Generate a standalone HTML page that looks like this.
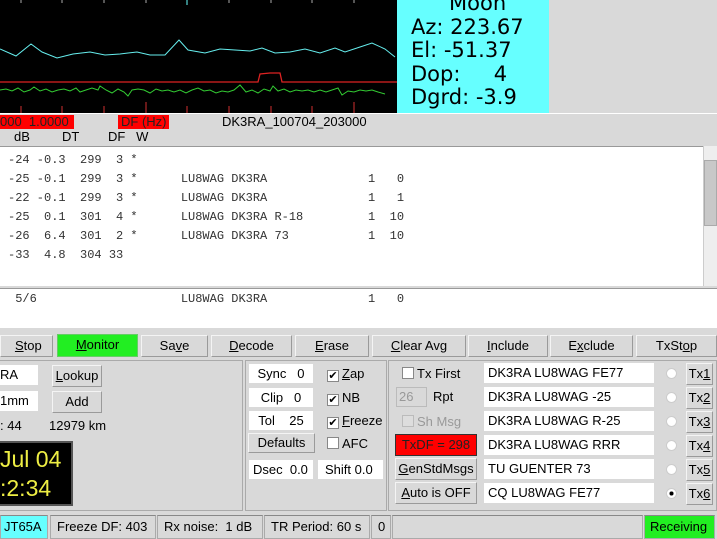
<!DOCTYPE html>
<html><head><meta charset="utf-8"><style>
*{box-sizing:border-box;margin:0;padding:0}
body{width:717px;height:539px;overflow:hidden;background:#d9d9d9;font-family:"Liberation Sans",sans-serif;font-size:13px;color:#000;position:relative}
.a{position:absolute}
.btn{position:absolute;background:#d9d9d9;border:1px solid #f4f4f4;border-right-color:#9a9a9a;border-bottom-color:#9a9a9a;text-align:center;font-size:13px;line-height:20px}
.in{position:absolute;background:#fff;font-size:13px;line-height:19px;padding-left:4px}
.cb{display:inline-block;width:12px;height:12px;background:#fff;border:1px solid #888;vertical-align:-1px;margin-right:3px;font-size:11px;line-height:10px;text-align:center}
.rad{position:absolute;width:11px;height:11px;border-radius:50%;background:#fff;border:1px solid #ccc}
pre{font-family:"Liberation Mono",monospace;font-size:12px;line-height:19px;color:#333}
.sb{position:absolute;top:515px;height:24px;border:1px solid #aaa;border-top-color:#888;line-height:22px;font-size:13px;padding-left:6px}
u{text-decoration:underline}
</style></head><body>
<div class="a" style="left:0;top:0;width:397px;height:113px;background:#000">
<svg width="397" height="113">
<g stroke="#d03030" stroke-width="1">
<line x1="21" y1="106" x2="21" y2="113"/><line x1="62" y1="106" x2="62" y2="113"/><line x1="104" y1="106" x2="104" y2="113"/><line x1="146" y1="102" x2="146" y2="113"/><line x1="187" y1="106" x2="187" y2="113"/><line x1="229" y1="106" x2="229" y2="113"/><line x1="271" y1="106" x2="271" y2="113"/><line x1="312" y1="106" x2="312" y2="113"/><line x1="354" y1="102" x2="354" y2="113"/></g>
<g stroke="#aaa"><line x1="21" y1="0" x2="21" y2="3"/><line x1="62" y1="0" x2="62" y2="3"/><line x1="104" y1="0" x2="104" y2="3"/><line x1="146" y1="0" x2="146" y2="3"/><line x1="229" y1="0" x2="229" y2="3"/><line x1="271" y1="0" x2="271" y2="3"/><line x1="312" y1="0" x2="312" y2="3"/><line x1="354" y1="0" x2="354" y2="3"/></g>
<line x1="187" y1="0" x2="187" y2="5" stroke="#6ff"/>
<polyline fill="none" stroke="#6ee" stroke-width="1" points="0,49 16,56 31,44 42,52 57,58 73,54 90,52 105,55 120,54 137,52 150,55 165,55 179,40 188,50 205,53 220,49 235,50 250,51 262,48 275,53 290,52 305,49 320,53 335,48 345,52 360,47 372,43 385,49 395,57"/>
<polyline fill="none" stroke="#d22" stroke-width="1.3" points="0,82 258,82 260,74 270,73 280,73 282,82 397,82"/>
<polyline fill="none" stroke="#3c3" stroke-width="1" points="0,90 6,89 12,91 18,88 24,92 30,90 34,87 40,91 46,89 52,92 58,90 64,89 70,91 76,88 80,92 86,90 92,88 98,90 100,86 106,90 112,93 118,89 124,92 128,96 132,90 138,89 144,90 150,93 156,89 162,91 168,90 174,92 180,90 186,93 192,90 198,88 204,91 210,90 216,93 222,91 228,92 234,90 240,85 246,92 252,90 258,93 264,89 270,91 273,86 278,91 284,89 290,92 296,90 302,91 308,90 314,92 320,90 326,92 332,90 338,88 342,95 348,91 354,92 360,90 366,91 372,90 378,92 385,94"/>
</svg></div>
<div class="a" style="left:397px;top:0;width:152px;height:113px;background:#6ff;font-family:'DejaVu Sans',sans-serif;font-size:21px;line-height:23.5px;padding-left:14px">
<div style="margin-top:-8px;padding-left:38px">Moon</div><div>Az: 223.67</div><div>El: -51.37</div><div>Dop:&nbsp;&nbsp;&nbsp;&nbsp;&nbsp;4</div><div>Dgrd: -3.9</div></div>
<div class="a" style="left:0;top:113px;width:717px;height:1px;background:#fff"></div>
<div class="a" style="left:0;top:115px;width:74px;height:14px;background:#f00;font-size:13px;line-height:14px;color:#222">000&nbsp;&nbsp;1.0000</div>
<div class="a" style="left:118px;top:115px;width:51px;height:14px;background:#f00;font-size:13px;line-height:14px;color:#222;padding-left:3px">DF (Hz)</div>
<div class="a" style="left:222px;top:115px;font-size:13px;line-height:14px">DK3RA_100704_203000</div>
<div class="a" style="left:14px;top:130px;font-size:13px;line-height:14px;word-spacing:0">dB</div>
<div class="a" style="left:62px;top:130px;font-size:13px;line-height:14px">DT</div>
<div class="a" style="left:108px;top:130px;font-size:13px;line-height:14px">DF&nbsp;&nbsp;&nbsp;W</div>
<div class="a" style="left:0;top:146px;width:703px;height:140px;background:#fff;border-top:1px solid #999;padding:4px 0 0 8px"><pre>-24 -0.3  299  3 *
-25 -0.1  299  3 *      LU8WAG DK3RA              1   0
-22 -0.1  299  3 *      LU8WAG DK3RA              1   1
-25  0.1  301  4 *      LU8WAG DK3RA R-18         1  10
-26  6.4  301  2 *      LU8WAG DK3RA 73           1  10
-33  4.8  304 33</pre></div>
<div class="a" style="left:703px;top:146px;width:14px;height:140px;background:#eee;border-left:1px solid #ccc"><div style="margin-top:14px;height:66px;background:#c8c8c8;border:1px solid #aaa"></div></div>
<div class="a" style="left:0;top:288px;width:717px;height:40px;background:#fff;border-top:1px solid #999;padding:1px 0 0 8px"><pre> 5/6                    LU8WAG DK3RA              1   0</pre></div>
<div class="btn" style="left:0;top:335px;width:53px;height:22px">&nbsp;<u>S</u>top</div>
<div class="btn" style="left:57px;top:334px;width:81px;height:23px;background:#2e2;border:1px solid #6c6"><u>M</u>onitor</div>
<div class="btn" style="left:141px;top:335px;width:67px;height:22px">Sa<u>v</u>e</div>
<div class="btn" style="left:211px;top:335px;width:81px;height:22px"><u>D</u>ecode</div>
<div class="btn" style="left:295px;top:335px;width:74px;height:22px"><u>E</u>rase</div>
<div class="btn" style="left:372px;top:335px;width:94px;height:22px"><u>C</u>lear Avg</div>
<div class="btn" style="left:468px;top:335px;width:80px;height:22px"><u>I</u>nclude</div>
<div class="btn" style="left:550px;top:335px;width:83px;height:22px">E<u>x</u>clude</div>
<div class="btn" style="left:636px;top:335px;width:81px;height:22px">TxSt<u>o</u>p</div>
<div class="a" style="left:0;top:360px;width:243px;height:151px;border:1px solid #aaa;border-left:none"></div>
<div class="a" style="left:245px;top:360px;width:142px;height:151px;border:1px solid #aaa"></div>
<div class="a" style="left:388px;top:360px;width:329px;height:151px;border:1px solid #aaa"></div>
<div class="in" style="left:0;top:365px;width:38px;height:20px;padding-left:0">RA</div>
<div class="btn" style="left:52px;top:365px;width:50px;height:22px"><u>L</u>ookup</div>
<div class="in" style="left:0;top:391px;width:38px;height:20px;padding-left:0">1mm</div>
<div class="btn" style="left:52px;top:391px;width:50px;height:22px">Add</div>
<div class="a" style="left:0;top:418px;line-height:16px">: 44</div>
<div class="a" style="left:49px;top:418px;line-height:16px">12979 km</div>
<div class="a" style="left:-2px;top:441px;width:75px;height:65px;background:#000;border:2px solid #555;color:#ee4;font-size:23px;line-height:29px;padding-top:2px">Jul 04<br>:2:34</div>
<div class="in" style="left:249px;top:364px;width:64px;height:19px;text-align:center;padding:0">Sync&nbsp;&nbsp; 0</div>
<div class="in" style="left:249px;top:388px;width:64px;height:19px;text-align:center;padding:0">Clip&nbsp;&nbsp; 0</div>
<div class="in" style="left:249px;top:411px;width:64px;height:19px;text-align:center;padding:0">Tol&nbsp;&nbsp;&nbsp; 25</div>
<div class="btn" style="left:248px;top:433px;width:67px;height:20px;line-height:18px">Defaults</div>
<div class="in" style="left:249px;top:460px;width:64px;height:19px;padding:0 0 0 4px">Dsec&nbsp; 0.0</div>
<div class="in" style="left:318px;top:460px;width:65px;height:19px;padding:0 0 0 7px">Shift 0.0</div>
<div class="a" style="left:327px;top:366px;line-height:16px"><span class="cb">✔</span><u>Z</u>ap</div>
<div class="a" style="left:327px;top:390px;line-height:16px"><span class="cb">✔</span>NB</div>
<div class="a" style="left:327px;top:413px;line-height:16px"><span class="cb">✔</span><u>F</u>reeze</div>
<div class="a" style="left:327px;top:436px;line-height:16px"><span class="cb"></span>AFC</div>
<div class="a" style="left:402px;top:366px;line-height:16px"><span class="cb"></span>Tx First</div>
<div class="a" style="left:396px;top:387px;width:31px;height:20px;background:#d9d9d9;border:1px solid #bbb;color:#999;line-height:18px;padding-left:2px">26</div>
<div class="a" style="left:433px;top:389px;line-height:16px">Rpt</div>
<div class="a" style="left:402px;top:414px;line-height:16px;color:#999"><span class="cb" style="background:#ddd;border-color:#bbb"></span>Sh Msg</div>
<div class="btn" style="left:395px;top:434px;width:82px;height:22px;background:#f00;border:1px solid #333;color:#222">TxDF = 298</div>
<div class="btn" style="left:395px;top:458px;width:82px;height:22px"><u>G</u>enStdMsgs</div>
<div class="btn" style="left:395px;top:482px;width:82px;height:22px"><u>A</u>uto is OFF</div>
<div class="in" style="left:484px;top:363px;width:170px;height:20px">DK3RA LU8WAG FE77</div>
<div class="in" style="left:484px;top:387px;width:170px;height:20px">DK3RA LU8WAG -25</div>
<div class="in" style="left:484px;top:411px;width:170px;height:20px">DK3RA LU8WAG R-25</div>
<div class="in" style="left:484px;top:435px;width:170px;height:20px">DK3RA LU8WAG RRR</div>
<div class="in" style="left:484px;top:459px;width:170px;height:20px">TU GUENTER 73</div>
<div class="in" style="left:484px;top:483px;width:170px;height:20px">CQ LU8WAG FE77</div>
<div class="rad" style="left:666px;top:368px"></div>
<div class="rad" style="left:666px;top:392px"></div>
<div class="rad" style="left:666px;top:416px"></div>
<div class="rad" style="left:666px;top:440px"></div>
<div class="rad" style="left:666px;top:464px"></div>
<div class="rad" style="left:666px;top:488px;background:radial-gradient(#000 30%,#fff 35%)"></div>
<div class="btn" style="left:686px;top:363px;width:27px;height:22px">Tx<u>1</u></div>
<div class="btn" style="left:686px;top:387px;width:27px;height:22px">Tx<u>2</u></div>
<div class="btn" style="left:686px;top:411px;width:27px;height:22px">Tx<u>3</u></div>
<div class="btn" style="left:686px;top:435px;width:27px;height:22px">Tx<u>4</u></div>
<div class="btn" style="left:686px;top:459px;width:27px;height:22px">Tx<u>5</u></div>
<div class="btn" style="left:686px;top:483px;width:27px;height:22px">Tx<u>6</u></div>
<div class="sb" style="left:0;width:48px;background:#6ff;padding-left:3px">JT65A</div>
<div class="sb" style="left:50px;width:106px">Freeze DF: 403</div>
<div class="sb" style="left:157px;width:106px">Rx noise:&nbsp; 1 dB</div>
<div class="sb" style="left:264px;width:106px">TR Period: 60 s</div>
<div class="sb" style="left:371px;width:20px">0</div>
<div class="sb" style="left:392px;width:251px"></div>
<div class="sb" style="left:644px;width:71px;background:#2e2;padding-left:5px">Receiving</div>
</body></html>
